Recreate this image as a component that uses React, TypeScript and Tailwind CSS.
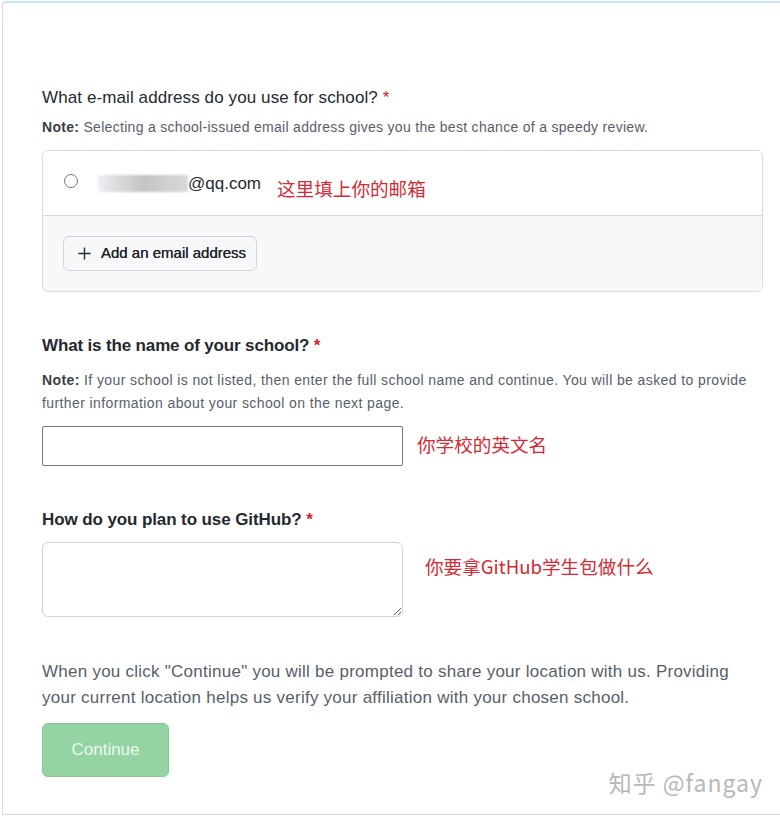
import React from "react";

const font = { fontFamily: '"Liberation Sans", "Noto Sans CJK SC", sans-serif' };
const cjk = { fontFamily: '"Noto Sans CJK SC", sans-serif' };

export default function App() {
  return (
    <div className="w-[780px] h-[818px] bg-white overflow-hidden" style={font}>
      <div className="ml-[2px] mt-[1px] h-[814px] border-t-2 border-t-[#c5e6f2] border-l border-l-[#d8dae6] border-b border-b-[#d8d8de] rounded-tl-[4px] pl-[39px] pt-[83px]">
        {/* Email question */}
        <div className="text-[17px] leading-[24px] text-[#24292f] tracking-[0.1px]">
          What e-mail address do you use for school? <span className="text-[#cf222e]">*</span>
        </div>
        <div className="mt-[7px] text-[14px] leading-[20px] text-[#57606a] tracking-[0.3px]">
          <b className="text-[#3a3f45]">Note:</b> Selecting a school-issued email address gives you the best chance of a speedy review.
        </div>
        <div className="mt-[13px] w-[721px] h-[142px] border border-[#d6d9de] rounded-[6px] flex flex-col overflow-hidden">
          <div className="h-[65px] bg-white border-b border-[#d6d9de] flex items-center pl-[21px]">
            <span className="w-[14px] h-[14px] rounded-full border border-[#767676] bg-white mb-[4px]" />
            <span className="ml-[20px] flex items-center mt-[1px]">
              <span className="inline-block w-[90px] h-[17px] bg-gradient-to-r from-[#e9ecf1] via-[#b8b4b6] to-[#cfd0d4] opacity-80 blur-[1px]" />
              <span className="text-[17px] text-[#24292f]">@qq.com</span>
            </span>
            <span className="ml-[16px] mt-[9px] text-[18.6px] text-[#d42a33]" style={cjk}>这里填上你的邮箱</span>
          </div>
          <div className="flex-1 bg-[#f6f8fa] pl-[20px] pt-[20px]">
            <button className="h-[35px] pl-[13px] pr-[10px] border border-[#d0d4d9] rounded-[6px] bg-[#f6f8fa] flex items-center gap-[9px] text-[15px] text-[#1f2328]" style={font}>
              <svg width="15" height="15" viewBox="0 0 16 16" fill="#24292f"><path d="M7.25 1.5h1.5v5.75h5.75v1.5H8.75v5.75h-1.5V8.75H1.5v-1.5h5.75z" /></svg>
              <span className="[text-shadow:0_0_0.4px_#1f2328]">Add an email address</span>
            </button>
          </div>
        </div>

        {/* School */}
        <div className="mt-[42px] text-[17px] leading-[24px] font-bold text-[#24292f] tracking-[-0.15px]">
          What is the name of your school? <span className="text-[#cf222e]">*</span>
        </div>
        <div className="mt-[11px] w-[716px] text-[14px] leading-[23px] text-[#57606a] tracking-[0.4px]">
          <b className="text-[#3a3f45]">Note:</b> If your school is not listed, then enter the full school name and continue. You will be asked to provide further information about your school on the next page.
        </div>
        <div className="mt-[11px] flex items-center">
          <input className="w-[361px] h-[40px] border border-[#767676] rounded-[2px] bg-white outline-none" />
          <span className="ml-[14px] mb-[4px] text-[18.6px] text-[#d42a33]" style={cjk}>你学校的英文名</span>
        </div>

        {/* GitHub use */}
        <div className="mt-[42px] text-[17px] leading-[24px] font-bold text-[#24292f] tracking-[-0.1px]">
          How do you plan to use GitHub? <span className="text-[#cf222e]">*</span>
        </div>
        <div className="mt-[10px] flex items-start">
          <textarea className="w-[361px] h-[75px] border border-[#cfd3d8] rounded-[6px] bg-white outline-none" />
          <span className="ml-[22px] mt-[10px] text-[18.6px] text-[#d42a33]" style={cjk}>你要拿GitHub学生包做什么</span>
        </div>

        <p className="mt-[42px] w-[700px] text-[17px] leading-[26px] text-[#57606a] tracking-[0.25px]">
          When you click "Continue" you will be prompted to share your location with us. Providing your current location helps us verify your affiliation with your chosen school.
        </p>

        <div className="mt-[12px] flex items-end">
          <button className="w-[127px] h-[54px] rounded-[6px] bg-[#94d3a2] border border-[#86c995] text-[17px] text-[#eef8f0]" style={font}>Continue</button>
          <span className="ml-auto mr-[17px] mb-[-22px] text-[23px] tracking-[1px] text-[#b8b8b8]" style={cjk}>知乎 @fangay</span>
        </div>
      </div>
    </div>
  );
}
